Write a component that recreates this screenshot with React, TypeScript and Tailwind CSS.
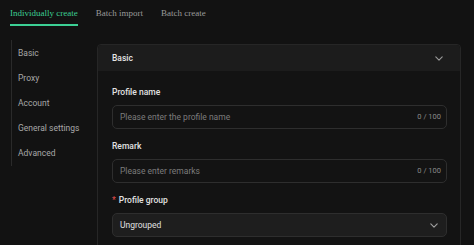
import React from "react";

const Chevron = ({ className = "" }: { className?: string }) => (
  <svg viewBox="0 0 10 6" width="8" height="5" className={className} fill="none" stroke="currentColor" strokeWidth="1.4" strokeLinecap="round" strokeLinejoin="round">
    <path d="M1 1l4 4 4-4" />
  </svg>
);

export default function App() {
  const navItems = ["Basic", "Proxy", "Account", "General settings", "Advanced"];
  return (
    <div className="w-[474px] h-[245px] overflow-hidden bg-[#121212] text-[#d8d8d8]" style={{ fontFamily: "Roboto, 'Noto Sans', sans-serif" }}>
      {/* Tabs */}
      <div className="flex h-[28px] gap-[18px] pl-[10px] items-stretch" style={{ fontFamily: "'Liberation Serif', serif" }}>
        <div className="relative flex items-center text-[9px] text-[#3ccf94]">
          Individually create
          <div className="absolute left-0 right-0 top-[24px] h-[2px] bg-[#3ccf94]" />
        </div>
        <div className="flex items-center text-[9px] text-[#9a9a9a]">Batch import</div>
        <div className="flex items-center text-[9px] text-[#9a9a9a]">Batch create</div>
      </div>

      <div className="flex items-start pt-[12px]">
        {/* Left nav */}
        <div className="w-[97px] shrink-0 pl-[11px]">
          <div className="border-l border-[#2a2a2a] pl-[6px] pt-[1px] flex flex-col h-[126px]">
            {navItems.map((t) => (
              <div key={t} className="h-[26px] flex items-center text-[8.5px] text-[#a8a8a8]">
                {t}
              </div>
            ))}
          </div>
        </div>

        {/* Card */}
        <div className="mt-[4px] w-[364px] h-[220px] border border-[#262626] rounded-t-[4px] bg-[#131313]">
          <div className="h-[26px] bg-[#1c1c1c] flex items-center justify-between pl-[14px] pr-[17px] rounded-t-[4px]">
            <span className="text-[8.5px] text-[#e6e6e6] font-medium">Basic</span>
            <Chevron className="text-[#9a9a9a]" />
          </div>
          <div className="pl-[14px] pr-[13px] pt-[14px] flex flex-col">
            <div className="h-[14px] flex items-center text-[8.5px] text-[#e2e2e2] font-medium">Profile name</div>
            <div className="mt-[6px] h-[24px] border border-[#2e2e2e] rounded-[5px] flex items-center justify-between pl-[7px] pr-[5px]">
              <span className="text-[8.5px] text-[#7c7c7c]">Please enter the profile name</span>
              <span className="text-[7.5px] text-[#8a8a8a]">0 / 100</span>
            </div>
            <div className="mt-[10px] h-[14px] flex items-center text-[8.5px] text-[#e2e2e2] font-medium">Remark</div>
            <div className="mt-[6px] h-[24px] border border-[#2e2e2e] rounded-[5px] flex items-center justify-between pl-[7px] pr-[5px]">
              <span className="text-[8.5px] text-[#7c7c7c]">Please enter remarks</span>
              <span className="text-[7.5px] text-[#8a8a8a]">0 / 100</span>
            </div>
            <div className="mt-[10px] h-[14px] flex items-center text-[8.5px] text-[#e2e2e2] font-medium">
              <span className="text-[#d94a4a] mr-[3px]">*</span>Profile group
            </div>
            <div className="mt-[6px] h-[24px] border border-[#2e2e2e] bg-[#1e1e1e] rounded-[5px] flex items-center justify-between pl-[7px] pr-[8px]">
              <span className="text-[8.5px] text-[#e0e0e0]">Ungrouped</span>
              <Chevron className="text-[#a0a0a0]" />
            </div>
          </div>
        </div>
      </div>
    </div>
  );
}
